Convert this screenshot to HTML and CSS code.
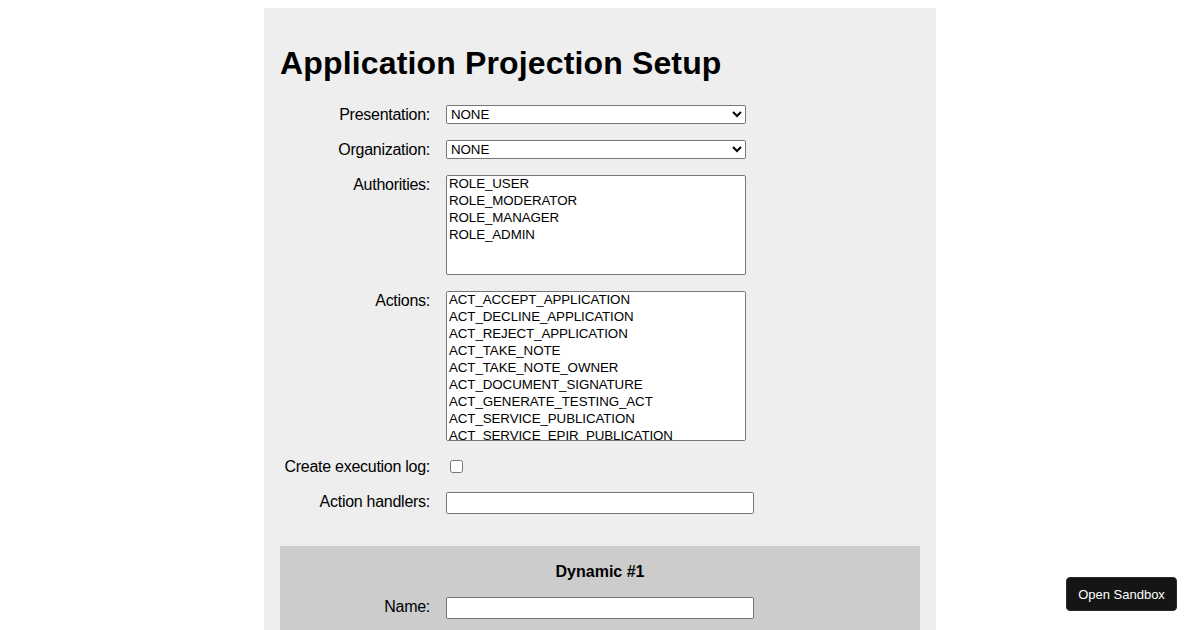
FILE: index.html
```html
<!DOCTYPE html>
<html>
<head>
<meta charset="utf-8">
<title>Application Projection Setup</title>
<link rel="stylesheet" href="styles.css">
</head>
<body>
<div class="page">
  <h1 class="title">Application Projection Setup</h1>
  <form class="form">
    <div class="row">
      <label class="label" for="presentation">Presentation:</label>
      <select id="presentation" class="field">
        <option>NONE</option>
      </select>
    </div>
    <div class="row">
      <label class="label" for="organization">Organization:</label>
      <select id="organization" class="field">
        <option>NONE</option>
      </select>
    </div>
    <div class="row">
      <label class="label" for="authorities">Authorities:</label>
      <select id="authorities" class="field list list-short" multiple>
        <option>ROLE_USER</option>
        <option>ROLE_MODERATOR</option>
        <option>ROLE_MANAGER</option>
        <option>ROLE_ADMIN</option>
      </select>
    </div>
    <div class="row">
      <label class="label" for="actions">Actions:</label>
      <select id="actions" class="field list list-tall" multiple>
        <option>ACT_ACCEPT_APPLICATION</option>
        <option>ACT_DECLINE_APPLICATION</option>
        <option>ACT_REJECT_APPLICATION</option>
        <option>ACT_TAKE_NOTE</option>
        <option>ACT_TAKE_NOTE_OWNER</option>
        <option>ACT_DOCUMENT_SIGNATURE</option>
        <option>ACT_GENERATE_TESTING_ACT</option>
        <option>ACT_SERVICE_PUBLICATION</option>
        <option>ACT_SERVICE_EPIR_PUBLICATION</option>
        <option>ACT_SERVICE_ARCHIVE</option>
      </select>
    </div>
    <div class="row">
      <label class="label" for="execlog">Create execution log:</label>
      <input id="execlog" class="check" type="checkbox">
    </div>
    <div class="row">
      <label class="label" for="handlers">Action handlers:</label>
      <input id="handlers" class="field text" type="text">
    </div>

    <div class="dynamic">
      <div class="dynamic-title">Dynamic #1</div>
      <div class="row">
        <label class="label" for="dynname">Name:</label>
        <input id="dynname" class="field text" type="text">
      </div>
    </div>
  </form>
</div>
<button class="sandbox" type="button">Open Sandbox</button>
</body>
</html>
```

FILE: styles.css
```css
html, body {
  margin: 0;
  padding: 0;
  background: #ffffff;
  overflow: hidden;
}

body {
  padding-top: 8px;
  font-family: "Liberation Sans", Arial, sans-serif;
  font-size: 16px;
  color: #000;
}

.page {
  width: 640px;
  margin: 0 auto;
  padding: 18px 16px 16px;
  background: #eeeeee;
  min-height: 700px;
}

.title {
  font-size: 32px;
  font-weight: bold;
  margin: 19px 0 23px;
  line-height: 37px;
  letter-spacing: 0.15px;
}

.form {
  display: flex;
  flex-direction: column;
  gap: 16px;
}

.row {
  display: grid;
  grid-template-columns: 150px 1fr;
  column-gap: 16px;
  align-items: start;
}

.label {
  text-align: right;
  line-height: 18px;
  padding-top: 1px;
  white-space: nowrap;
  letter-spacing: -0.27px;
}

.field {
  width: 300px;
  font-family: "Liberation Sans", Arial, sans-serif;
  font-size: 13.33px;
  letter-spacing: -0.08px;
  margin: 0;
}

.list {
  display: block;
}

.list-short {
  height: 100px;
}

.list-tall {
  height: 150px;
}

.text {
  height: 22px;
  box-sizing: border-box;
  width: 308px;
}

.check {
  margin: 3px 3px 3px 4px;
  justify-self: start;
}

.dynamic {
  margin-top: 16px;
  background: #cccccc;
  padding: 17px 0 24px;
  display: flex;
  flex-direction: column;
  gap: 16px;
}

.dynamic-title {
  text-align: center;
  font-weight: bold;
  line-height: 18px;
}

.sandbox {
  position: fixed;
  right: 23px;
  bottom: 19px;
  width: 111px;
  height: 34px;
  background: #151515;
  color: #ffffff;
  border: 1px solid #2a2a2a;
  border-radius: 4px;
  font-family: "Liberation Sans", Arial, sans-serif;
  font-size: 13px;
  padding: 0;
}
```
